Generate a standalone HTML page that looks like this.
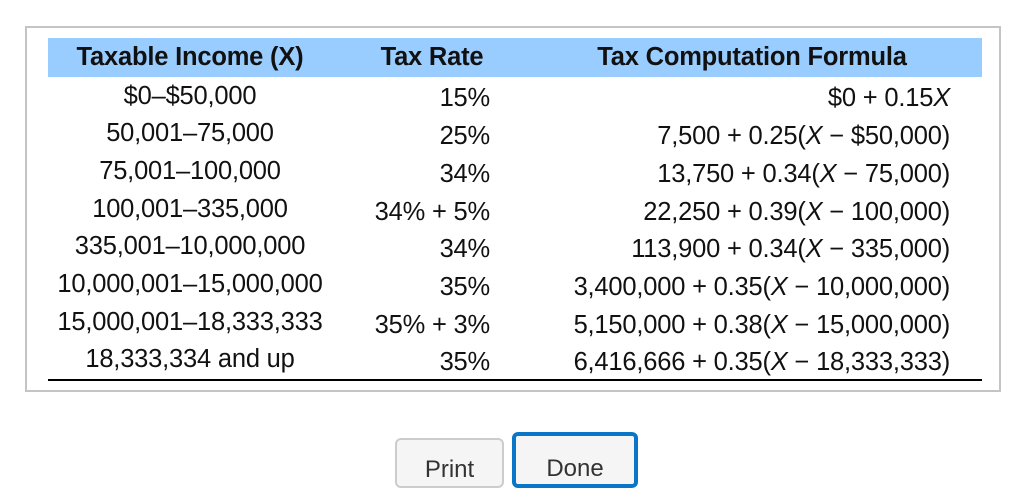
<!DOCTYPE html>
<html><head><meta charset="utf-8"><style>
body{margin:0;width:1036px;height:468px;background:#fff;font-family:"Liberation Sans",Arial,sans-serif;overflow:hidden;position:relative;color:#111}
.box{position:absolute;left:25px;top:26px;width:976px;height:366px;border:2px solid #c4c4c4;box-sizing:border-box}
.hdr{position:absolute;left:48px;top:38px;width:934px;height:39px;background:#99ccff}
.t{position:absolute;font-size:25.5px;white-space:nowrap;line-height:28px;letter-spacing:-0.2px}
.h{font-weight:bold;top:43px}
.c1{left:40px;width:300px;text-align:center}
.c2{left:340px;width:150px;text-align:right}
.c3{left:450px;width:500px;text-align:right}
.line{position:absolute;left:48px;top:379px;width:934px;height:2px;background:#000}
.btn{position:absolute;background:#f5f5f5;border:2px solid #ccc;border-radius:6px;box-sizing:border-box;font-size:24px;text-align:center;color:#333;padding-top:16px}
</style></head><body>
<div class="box"></div>
<div class="hdr"></div>
<div class="t h c1">Taxable Income (X)</div>
<div class="t h" style="left:360px;width:144px;text-align:center">Tax Rate</div>
<div class="t h" style="left:552px;width:400px;text-align:center">Tax Computation Formula</div>

<div class="t c1" style="top:82px">$0–$50,000</div>
<div class="t c2" style="top:84px">15%</div>
<div class="t c3" style="top:84px">$0 + 0.15<i>X</i></div>

<div class="t c1" style="top:119px">50,001–75,000</div>
<div class="t c2" style="top:122px">25%</div>
<div class="t c3" style="top:122px">7,500 + 0.25(<i>X</i> − $50,000)</div>

<div class="t c1" style="top:157px">75,001–100,000</div>
<div class="t c2" style="top:160px">34%</div>
<div class="t c3" style="top:160px">13,750 + 0.34(<i>X</i> − 75,000)</div>

<div class="t c1" style="top:195px">100,001–335,000</div>
<div class="t c2" style="top:198px">34% + 5%</div>
<div class="t c3" style="top:198px">22,250 + 0.39(<i>X</i> − 100,000)</div>

<div class="t c1" style="top:232px">335,001–10,000,000</div>
<div class="t c2" style="top:235px">34%</div>
<div class="t c3" style="top:235px">113,900 + 0.34(<i>X</i> − 335,000)</div>

<div class="t c1" style="top:270px">10,000,001–15,000,000</div>
<div class="t c2" style="top:273px">35%</div>
<div class="t c3" style="top:273px">3,400,000 + 0.35(<i>X</i> − 10,000,000)</div>

<div class="t c1" style="top:308px">15,000,001–18,333,333</div>
<div class="t c2" style="top:311px">35% + 3%</div>
<div class="t c3" style="top:311px">5,150,000 + 0.38(<i>X</i> − 15,000,000)</div>

<div class="t c1" style="top:345px">18,333,334 and up</div>
<div class="t c2" style="top:348px">35%</div>
<div class="t c3" style="top:348px">6,416,666 + 0.35(<i>X</i> − 18,333,333)</div>

<div class="line"></div>
<div class="btn" style="left:395px;top:438px;width:109px;height:50px">Print</div>
<div class="btn" style="left:512px;top:432px;width:126px;height:56px;border:4px solid #0a76c8;padding-top:19px">Done</div>
</body></html>
